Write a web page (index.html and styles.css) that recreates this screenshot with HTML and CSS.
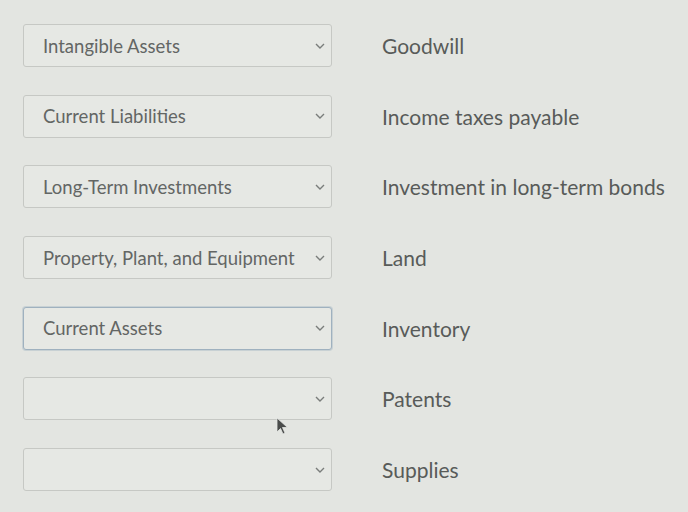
FILE: index.html
```html
<!DOCTYPE html>
<html lang="en">
<head>
    <meta charset="UTF-8">
    <meta name="viewport" content="width=device-width, initial-scale=1.0">
    <title>Classify Accounts</title>
    <link rel="stylesheet" href="styles.css">
</head>
<body>
    <div class="match-list">
        <div class="match-row">
            <div class="dropdown">
                <span class="choice">Intangible Assets</span>
                <svg class="chevron" viewBox="0 0 10 6" width="10" height="6"><path d="M1 1l4 4 4-4" /></svg>
            </div>
            <span class="account">Goodwill</span>
        </div>
        <div class="match-row">
            <div class="dropdown">
                <span class="choice">Current Liabilities</span>
                <svg class="chevron" viewBox="0 0 10 6" width="10" height="6"><path d="M1 1l4 4 4-4" /></svg>
            </div>
            <span class="account">Income taxes payable</span>
        </div>
        <div class="match-row">
            <div class="dropdown">
                <span class="choice">Long-Term Investments</span>
                <svg class="chevron" viewBox="0 0 10 6" width="10" height="6"><path d="M1 1l4 4 4-4" /></svg>
            </div>
            <span class="account">Investment in long-term bonds</span>
        </div>
        <div class="match-row">
            <div class="dropdown">
                <span class="choice">Property, Plant, and Equipment</span>
                <svg class="chevron" viewBox="0 0 10 6" width="10" height="6"><path d="M1 1l4 4 4-4" /></svg>
            </div>
            <span class="account">Land</span>
        </div>
        <div class="match-row">
            <div class="dropdown focused">
                <span class="choice">Current Assets</span>
                <svg class="chevron" viewBox="0 0 10 6" width="10" height="6"><path d="M1 1l4 4 4-4" /></svg>
            </div>
            <span class="account">Inventory</span>
        </div>
        <div class="match-row">
            <div class="dropdown">
                <span class="choice"></span>
                <svg class="chevron" viewBox="0 0 10 6" width="10" height="6"><path d="M1 1l4 4 4-4" /></svg>
                <svg class="pointer" viewBox="0 0 12 18" width="12" height="18"><path d="M1 1v14l3.5-3.5 2.5 5.5 2-1-2.5-5.5h5z" /></svg>
            </div>
            <span class="account">Patents</span>
        </div>
        <div class="match-row">
            <div class="dropdown">
                <span class="choice"></span>
                <svg class="chevron" viewBox="0 0 10 6" width="10" height="6"><path d="M1 1l4 4 4-4" /></svg>
            </div>
            <span class="account">Supplies</span>
        </div>
    </div>
</body>
</html>
```

FILE: styles.css
```css
* {
    margin: 0;
    padding: 0;
    box-sizing: border-box;
}

body {
    background-color: #e3e5e1;
    font-family: Lato, 'Open Sans', sans-serif;
    color: #5f625f;
}

.match-list {
    display: flex;
    flex-direction: column;
    gap: 27.7px;
    padding: 24px 0 0 23px;
}

.match-row {
    display: flex;
    align-items: center;
    gap: 50px;
}

.dropdown {
    position: relative;
    display: flex;
    align-items: center;
    justify-content: space-between;
    width: 309px;
    height: 43px;
    padding: 0 6px 0 19px;
    background-color: #e6e8e4;
    border: 1px solid #c6c8c4;
    border-radius: 3px;
}

.dropdown.focused {
    border-color: #9fb1bf;
    box-shadow: 0 0 0 1px rgba(150, 172, 190, 0.35);
}

.choice {
    font-size: 18.5px;
    color: #636664;
    white-space: nowrap;
}

.chevron {
    fill: none;
    stroke: #7a7d7b;
    stroke-width: 1.4;
}

.pointer {
    position: absolute;
    left: 252px;
    top: 39px;
    fill: #4a4c4b;
    stroke: #e6e8e4;
    stroke-width: 0.8;
}

.account {
    font-size: 21px;
    color: #585b59;
}
```
